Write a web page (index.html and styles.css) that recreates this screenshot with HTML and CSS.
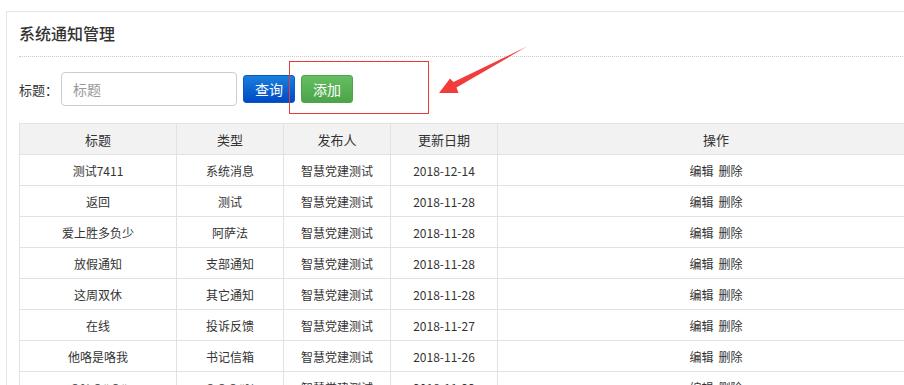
FILE: index.html
```html
<!DOCTYPE html>
<html>
	<head>
		<meta charset="UTF-8">
		<title>系统通知管理</title>
		<link rel="stylesheet" href="styles.css">
	</head>
	<body>
		<div id="page">
			<div class="panel">
				<h2 class="panel-title">系统通知管理</h2>
				<div class="search-bar">
					<label class="search-label">标题：</label>
					<input class="search-input" type="text" placeholder="标题">
					<button class="btn btn-blue">查询</button>
					<button class="btn btn-green">添加</button>
				</div>
				<table class="notice-table">
					<colgroup>
						<col style="width:157px">
						<col style="width:107px">
						<col style="width:107px">
						<col style="width:107px">
						<col>
					</colgroup>
					<thead>
						<tr><th>标题</th><th>类型</th><th>发布人</th><th>更新日期</th><th>操作</th></tr>
					</thead>
					<tbody>
						<tr><td>测试7411</td><td>系统消息</td><td>智慧党建测试</td><td>2018-12-14</td><td><a href="javascript:void(0)">编辑</a><a href="javascript:void(0)">删除</a></td></tr>
						<tr><td>返回</td><td>测试</td><td>智慧党建测试</td><td>2018-11-28</td><td><a href="javascript:void(0)">编辑</a><a href="javascript:void(0)">删除</a></td></tr>
						<tr><td>爱上胜多负少</td><td>阿萨法</td><td>智慧党建测试</td><td>2018-11-28</td><td><a href="javascript:void(0)">编辑</a><a href="javascript:void(0)">删除</a></td></tr>
						<tr><td>放假通知</td><td>支部通知</td><td>智慧党建测试</td><td>2018-11-28</td><td><a href="javascript:void(0)">编辑</a><a href="javascript:void(0)">删除</a></td></tr>
						<tr><td>这周双休</td><td>其它通知</td><td>智慧党建测试</td><td>2018-11-28</td><td><a href="javascript:void(0)">编辑</a><a href="javascript:void(0)">删除</a></td></tr>
						<tr><td>在线</td><td>投诉反馈</td><td>智慧党建测试</td><td>2018-11-27</td><td><a href="javascript:void(0)">编辑</a><a href="javascript:void(0)">删除</a></td></tr>
						<tr><td>他咯是咯我</td><td>书记信箱</td><td>智慧党建测试</td><td>2018-11-26</td><td><a href="javascript:void(0)">编辑</a><a href="javascript:void(0)">删除</a></td></tr>
						<tr><td>@%@#@#</td><td>@@@#%</td><td>智慧党建测试</td><td>2018-11-23</td><td><a href="javascript:void(0)">编辑</a><a href="javascript:void(0)">删除</a></td></tr>
					</tbody>
				</table>
			</div>
			<!-- 截图标注 -->
			<div class="mark-box"></div>
			<svg class="mark-arrow" width="100" height="60" viewBox="430 40 100 60">
				<polygon points="439,93 450,78.5 453.5,82 527,46.5 456.5,87.5 458.5,93" fill="#f23c3c"/>
			</svg>
		</div>
	</body>
</html>
```
FILE: styles.css
```css
* {
	margin: 0;
	padding: 0;
	box-sizing: border-box;
}
body {
	overflow: hidden;
	background-color: #fff;
	font-family: "Noto Sans CJK SC", "Liberation Sans", sans-serif;
	color: #333;
}
#page {
	position: relative;
	width: 980px;
	padding: 11px 0 0 6px;
}
.panel {
	width: 960px;
	border: 1px solid #e6e6e6;
	padding: 9px 0 40px 12px;
}
.panel-title {
	font-size: 16px;
	font-weight: 500;
	line-height: 24px;
	padding-bottom: 11px;
	border-bottom: 1px dotted #c8c8c8;
}
.search-bar {
	display: flex;
	align-items: center;
	margin-top: 15px;
	height: 34px;
}
.search-label {
	width: 42px;
	font-size: 13px;
}
.search-input {
	width: 176px;
	height: 34px;
	border: 1px solid #ccc;
	border-radius: 4px;
	padding: 0 11px;
	font-family: inherit;
	font-size: 14px;
	color: #333;
	outline: none;
}
.search-input::placeholder {
	color: #999;
}
.btn {
	width: 52px;
	height: 28px;
	margin-left: 6px;
	border-radius: 3px;
	color: #fff;
	font-family: inherit;
	font-size: 14px;
	cursor: pointer;
}
.btn-blue {
	background: linear-gradient(#1a80dc, #0048c6);
	border: 1px solid #0a5cc0;
}
.btn-green {
	background: linear-gradient(#66be63, #4ba449);
	border: 1px solid #4ea34c;
}
.notice-table {
	margin-top: 17px;
	width: 916px;
	table-layout: fixed;
	border-collapse: collapse;
	font-size: 12px;
}
.notice-table th,
.notice-table td {
	height: 31px;
	border: 1px solid #e2e2e2;
	text-align: center;
	font-weight: normal;
}
.notice-table th {
	background-color: #f2f2f2;
	font-size: 13px;
}
.notice-table a {
	color: #333;
	text-decoration: none;
}
.notice-table a + a {
	margin-left: 5px;
}
.mark-box {
	position: absolute;
	left: 289px;
	top: 61px;
	width: 140px;
	height: 53px;
	border: 1px solid #e83a3a;
}
.mark-arrow {
	position: absolute;
	left: 430px;
	top: 40px;
}
```
